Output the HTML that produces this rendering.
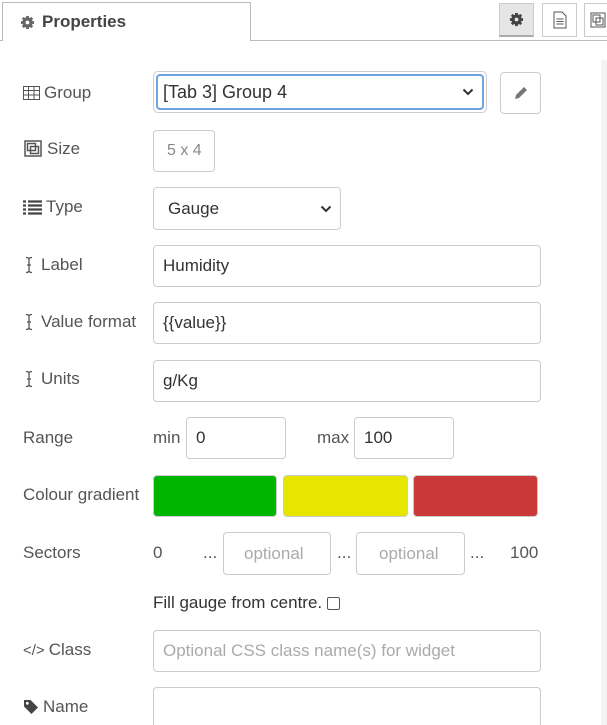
<!DOCTYPE html>
<html><head><style>
*{box-sizing:border-box}
html,body{margin:0;width:607px;height:725px;overflow:hidden}
body{background:#fff;font-family:"Liberation Sans",sans-serif;font-size:17px;color:#555;position:relative}
.a{position:absolute}
.box{position:absolute;border:1px solid #ccc;border-radius:4px;background:#fff;padding-left:9px;display:flex;align-items:center;color:#555}
.lbl{position:absolute;left:23px;display:flex;align-items:center;gap:4px;color:#555}
.ib{width:12px;height:18px;margin-right:2px}
.chev{position:absolute;right:8px;top:50%;margin-top:-4px}
</style></head><body>
<div class="a" style="left:0;top:40px;width:607px;height:1px;background:#bbb"></div>
<div class="a" style="left:2px;top:2px;width:249px;height:39px;border:1px solid #bbb;border-bottom:none;background:#fff;font-weight:bold;color:#444;display:flex;align-items:center;padding-left:17px;font-size:17px">
<svg width="15" height="15" viewBox="0 0 16 16" style="margin-right:7px"><circle cx="8" cy="8" r="5.5" fill="#666"/><g stroke="#666" stroke-width="3"><line x1="8" y1="1" x2="8" y2="15"/><line x1="1" y1="8" x2="15" y2="8"/><line x1="3" y1="3" x2="13" y2="13"/><line x1="13" y1="3" x2="3" y2="13"/></g><circle cx="8" cy="8" r="2" fill="#fff"/></svg>Properties</div>
<div class="a" style="left:499px;top:3px;width:35px;height:34px;background:#e6e6e6;border:1px solid #ccc;border-bottom:2px solid #aaa;display:flex;align-items:center;justify-content:center">
<svg width="15" height="15" viewBox="0 0 16 16"><circle cx="8" cy="8" r="5.5" fill="#444"/><g stroke="#444" stroke-width="3"><line x1="8" y1="1" x2="8" y2="15"/><line x1="1" y1="8" x2="15" y2="8"/><line x1="3" y1="3" x2="13" y2="13"/><line x1="13" y1="3" x2="3" y2="13"/></g><circle cx="8" cy="8" r="2" fill="#e6e6e6"/></svg></div>
<div class="a" style="left:542px;top:3px;width:35px;height:34px;border:1px solid #ccc;display:flex;align-items:center;justify-content:center">
<svg width="14" height="18" viewBox="0 0 14 18"><path d="M1 1h8l4 4v12H1z" fill="none" stroke="#555"/><path d="M3.5 8h7M3.5 10.5h7M3.5 13h7" stroke="#555"/></svg></div>
<div class="a" style="left:584px;top:3px;width:30px;height:34px;border:1px solid #ccc;display:flex;align-items:center;padding-left:4px">
<svg width="18" height="18" viewBox="0 0 18 18"><rect x="2" y="2" width="14" height="14" fill="none" stroke="#555"/><rect x="4" y="4" width="7" height="7" fill="none" stroke="#555"/><rect x="7" y="7" width="7" height="7" fill="none" stroke="#555"/></svg></div>
<div class="a" style="left:601px;top:60px;width:6px;height:665px;background:#f3f3f3"></div>

<div class="lbl" style="top:83px"><svg width="17" height="14" viewBox="0 0 17 14"><rect x=".5" y=".5" width="16" height="13" fill="none" stroke="#555"/><path d="M.5 4.5h16M.5 9h16M5.5 .5v13M11 .5v13" stroke="#555"/></svg>Group</div>
<div class="a" style="left:153px;top:71px;width:334px;height:42px;border:1px solid #ccc;border-radius:5px"></div>
<div class="box" style="left:156px;top:74px;width:328px;height:36px;border:2px solid #6fa3e0;color:#333;font-size:18px;padding-left:5px">[Tab 3] Group 4<svg class="chev" width="12" height="8" viewBox="0 0 12 8"><path d="M1.5 1.5l4.5 4.5 4.5-4.5" fill="none" stroke="#333" stroke-width="2"/></svg></div>
<div class="box" style="left:500px;top:72px;width:41px;height:42px;justify-content:center;padding:0"><svg width="16" height="16" viewBox="0 0 16 16"><path d="M2 14l1-4 8-8 3 3-8 8z" fill="#777"/></svg></div>

<div class="lbl" style="top:139px"><svg width="20" height="20" viewBox="0 0 20 20"><rect x="2" y="2" width="16" height="15" fill="none" stroke="#555" stroke-width="1.5"/><rect x="4.5" y="4.5" width="8" height="7" fill="none" stroke="#555" stroke-width="1.5"/><rect x="7.5" y="7.5" width="8" height="7" fill="none" stroke="#555" stroke-width="1.5"/></svg>Size</div>
<div class="box" style="left:153px;top:130px;width:62px;height:42px;color:#888;padding-left:13px;font-size:16px">5 x 4</div>

<div class="lbl" style="top:197px"><svg width="19" height="15" viewBox="0 0 19 15"><path d="M0 1.5h3M5 1.5h14M0 5.5h3M5 5.5h14M0 9.5h3M5 9.5h14M0 13.5h3M5 13.5h14" stroke="#444" stroke-width="2.2"/></svg>Type</div>
<div class="box" style="left:153px;top:187px;width:188px;height:43px;color:#333;padding-left:14px">Gauge<svg class="chev" width="12" height="8" viewBox="0 0 12 8"><path d="M1.5 1.5l4.5 4.5 4.5-4.5" fill="none" stroke="#333" stroke-width="2"/></svg></div>

<div class="lbl" style="top:255px"><svg class="ib" viewBox="0 0 12 18"><path d="M3 1.5c2 0 3 .5 3 2v11c0 1.5 1 2 3 2M9 1.5c-2 0-3 .5-3 2M6 14.5c0 1.5-1 2-3 2M4 9h4" fill="none" stroke="#555" stroke-width="1.3"/></svg>Label</div>
<div class="box" style="left:153px;top:245px;width:388px;height:42px;color:#333">Humidity</div>
<div class="lbl" style="top:312px"><svg class="ib" viewBox="0 0 12 18"><path d="M3 1.5c2 0 3 .5 3 2v11c0 1.5 1 2 3 2M9 1.5c-2 0-3 .5-3 2M6 14.5c0 1.5-1 2-3 2M4 9h4" fill="none" stroke="#555" stroke-width="1.3"/></svg>Value format</div>
<div class="box" style="left:153px;top:302px;width:388px;height:42px;color:#333">{{value}}</div>
<div class="lbl" style="top:369px"><svg class="ib" viewBox="0 0 12 18"><path d="M3 1.5c2 0 3 .5 3 2v11c0 1.5 1 2 3 2M9 1.5c-2 0-3 .5-3 2M6 14.5c0 1.5-1 2-3 2M4 9h4" fill="none" stroke="#555" stroke-width="1.3"/></svg>Units</div>
<div class="box" style="left:153px;top:360px;width:388px;height:42px;color:#333">g/Kg</div>

<div class="lbl" style="top:428px">Range</div>
<div class="a" style="left:153px;top:428px">min</div>
<div class="box" style="left:186px;top:417px;width:100px;height:42px;color:#333">0</div>
<div class="a" style="left:317px;top:428px">max</div>
<div class="box" style="left:354px;top:417px;width:100px;height:42px;color:#333">100</div>

<div class="lbl" style="top:485px">Colour gradient</div>
<div class="a" style="left:153px;top:475px;width:124px;height:42px;background:#00b500;border:1px solid #ccc;border-radius:4px"></div>
<div class="a" style="left:283px;top:475px;width:125px;height:42px;background:#e6e600;border:1px solid #ccc;border-radius:4px"></div>
<div class="a" style="left:413px;top:475px;width:125px;height:42px;background:#ca3838;border:1px solid #ccc;border-radius:4px"></div>

<div class="lbl" style="top:543px">Sectors</div>
<div class="a" style="left:153px;top:543px">0</div>
<div class="a" style="left:203px;top:543px">...</div>
<div class="box" style="left:223px;top:532px;width:108px;height:43px;padding-left:20px;color:#aaa">optional</div>
<div class="a" style="left:337px;top:543px">...</div>
<div class="box" style="left:356px;top:532px;width:109px;height:43px;padding-left:22px;color:#aaa">optional</div>
<div class="a" style="left:470px;top:543px">...</div>
<div class="a" style="left:510px;top:543px">100</div>

<div class="a" style="left:153px;top:593px;color:#333;display:flex;align-items:center">Fill gauge from centre.<span style="display:inline-block;width:13px;height:13px;border:1px solid #555;border-radius:2px;margin-left:5px"></span></div>

<div class="lbl" style="top:640px"><span style="font-size:15px">&lt;/&gt;</span>Class</div>
<div class="box" style="left:153px;top:630px;width:388px;height:42px;color:#aaa">Optional CSS class name(s) for widget</div>
<div class="lbl" style="top:697px"><svg width="16" height="16" viewBox="0 0 16 16"><path d="M1 1h6.5l7.5 7.5-6.5 6.5-7.5-7.5z" fill="#444"/><circle cx="4.3" cy="4.3" r="1.4" fill="#fff"/></svg>Name</div>
<div class="box" style="left:153px;top:687px;width:388px;height:38px;border-bottom:none;border-radius:4px 4px 0 0"></div>
</body></html>
